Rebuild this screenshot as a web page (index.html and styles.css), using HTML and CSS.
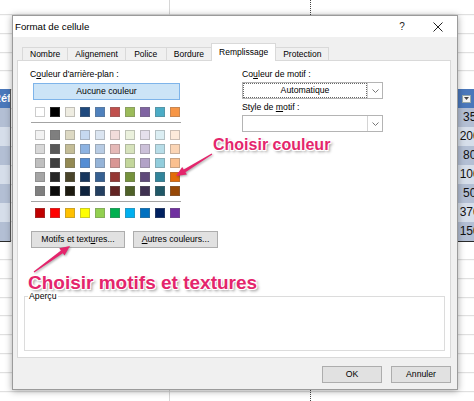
FILE: index.html
```html
<!DOCTYPE html>
<html lang="fr">
<head>
<meta charset="utf-8">
<title>Format de cellule</title>
<link rel="stylesheet" href="styles.css">
</head>
<body>
<div class="screen">
  <div class="sheet">
    <div class="tbl tbl-left">
      <div class="th"><span class="cut">Référence</span></div>
      <div class="td"></div><div class="td"></div><div class="td"></div><div class="td"></div>
      <div class="td"></div><div class="td"></div><div class="td"></div>
    </div>
    <div class="gap"></div>
    <div class="tbl tbl-right">
      <div class="th"><span class="filter"><svg width="5" height="3" viewBox="0 0 5 3"><path d="M0 0h5L2.5 3z" fill="#444"/></svg></span></div>
      <div class="td">350</div><div class="td">2000</div><div class="td">800</div><div class="td">1000</div>
      <div class="td">500</div><div class="td">3700</div><div class="td">1500</div>
    </div>
  </div>

  <div class="dialog">
    <div class="titlebar">
      <span class="title">Format de cellule</span>
      <span class="ctrl help">?</span>
      <span class="ctrl close"><svg width="10" height="10" viewBox="0 0 10 10"><path d="M0.5 0.5L9.5 9.5M9.5 0.5L0.5 9.5" stroke="#222" stroke-width="1" fill="none"/></svg></span>
    </div>
    <div class="body">
      <div class="tabs">
        <div class="tab">Nombre</div>
        <div class="tab">Alignement</div>
        <div class="tab">Police</div>
        <div class="tab">Bordure</div>
        <div class="tab active">Remplissage</div>
        <div class="tab">Protection</div>
      </div>
      <div class="panel">
        <div class="cols">
          <div class="left">
            <div class="lbl lbl-left">C<u>o</u>uleur d'arrière-plan :</div>
            <div class="none-btn">Aucune couleur</div>
            <div class="swrow row1">
              <span class="sw" style="background:#ffffff"></span>
              <span class="sw" style="background:#000000"></span>
              <span class="sw" style="background:#eeece1"></span>
              <span class="sw" style="background:#1f497d"></span>
              <span class="sw" style="background:#4f81bd"></span>
              <span class="sw" style="background:#c0504d"></span>
              <span class="sw" style="background:#9bbb59"></span>
              <span class="sw" style="background:#8064a2"></span>
              <span class="sw" style="background:#4bacc6"></span>
              <span class="sw" style="background:#f79646"></span>
            </div>
            <div class="sep"></div>
            <div class="grid">
              <div class="swrow">
                <span class="sw" style="background:#f2f2f2"></span>
                <span class="sw" style="background:#7f7f7f"></span>
                <span class="sw" style="background:#ddd9c3"></span>
                <span class="sw" style="background:#c6d9f0"></span>
                <span class="sw" style="background:#dbe5f1"></span>
                <span class="sw" style="background:#f2dcdb"></span>
                <span class="sw" style="background:#ebf1dd"></span>
                <span class="sw" style="background:#e5e0ec"></span>
                <span class="sw" style="background:#dbeef3"></span>
                <span class="sw" style="background:#fdeada"></span>
              </div>
              <div class="swrow">
                <span class="sw" style="background:#d8d8d8"></span>
                <span class="sw" style="background:#595959"></span>
                <span class="sw" style="background:#c4bd97"></span>
                <span class="sw" style="background:#8db3e2"></span>
                <span class="sw" style="background:#b8cce4"></span>
                <span class="sw" style="background:#e5b9b7"></span>
                <span class="sw" style="background:#d7e3bc"></span>
                <span class="sw" style="background:#ccc1d9"></span>
                <span class="sw" style="background:#b7dde8"></span>
                <span class="sw" style="background:#fbd5b5"></span>
              </div>
              <div class="swrow">
                <span class="sw" style="background:#bfbfbf"></span>
                <span class="sw" style="background:#3f3f3f"></span>
                <span class="sw" style="background:#938953"></span>
                <span class="sw" style="background:#548dd4"></span>
                <span class="sw" style="background:#95b3d7"></span>
                <span class="sw" style="background:#d99694"></span>
                <span class="sw" style="background:#c3d69b"></span>
                <span class="sw" style="background:#b2a2c7"></span>
                <span class="sw" style="background:#92cddc"></span>
                <span class="sw" style="background:#fac08f"></span>
              </div>
              <div class="swrow">
                <span class="sw" style="background:#a5a5a5"></span>
                <span class="sw" style="background:#262626"></span>
                <span class="sw" style="background:#494429"></span>
                <span class="sw" style="background:#17365d"></span>
                <span class="sw" style="background:#366092"></span>
                <span class="sw" style="background:#953734"></span>
                <span class="sw" style="background:#76923c"></span>
                <span class="sw" style="background:#5f497a"></span>
                <span class="sw" style="background:#31859b"></span>
                <span class="sw" style="background:#e36c09"></span>
              </div>
              <div class="swrow">
                <span class="sw" style="background:#7f7f7f"></span>
                <span class="sw" style="background:#0c0c0c"></span>
                <span class="sw" style="background:#1d1b10"></span>
                <span class="sw" style="background:#0f243e"></span>
                <span class="sw" style="background:#244061"></span>
                <span class="sw" style="background:#632423"></span>
                <span class="sw" style="background:#4f6128"></span>
                <span class="sw" style="background:#3f3151"></span>
                <span class="sw" style="background:#205867"></span>
                <span class="sw" style="background:#974806"></span>
              </div>
            </div>
            <div class="sep sep2"></div>
            <div class="swrow std">
              <span class="sw" style="background:#c00000"></span>
              <span class="sw" style="background:#ff0000"></span>
              <span class="sw" style="background:#ffc000"></span>
              <span class="sw" style="background:#ffff00"></span>
              <span class="sw" style="background:#92d050"></span>
              <span class="sw" style="background:#00b050"></span>
              <span class="sw" style="background:#00b0f0"></span>
              <span class="sw" style="background:#0070c0"></span>
              <span class="sw" style="background:#002060"></span>
              <span class="sw" style="background:#7030a0"></span>
            </div>
          </div>
          <div class="right">
            <div class="lbl">Co<u>u</u>leur de motif :</div>
            <div class="select focus">
              <div class="val">Automatique</div>
              <div class="arrow"><svg width="7" height="4" viewBox="0 0 7 4"><path d="M0.5 0.5L3.5 3.5L6.5 0.5" stroke="#777" fill="none"/></svg></div>
            </div>
            <div class="lbl lbl2">Style de <u>m</u>otif :</div>
            <div class="select">
              <div class="val"></div>
              <div class="arrow"><svg width="7" height="4" viewBox="0 0 7 4"><path d="M0.5 0.5L3.5 3.5L6.5 0.5" stroke="#777" fill="none"/></svg></div>
            </div>
          </div>
        </div>
        <div class="btnrow">
          <div class="btn btn-motifs">Motifs et text<u>u</u>res...</div>
          <div class="btn btn-autres"><u>A</u>utres couleurs...</div>
        </div>
        <fieldset class="preview">
          <legend>Aperçu</legend>
        </fieldset>
      </div>
      <div class="footer">
        <div class="btn btn-ok">OK</div>
        <div class="btn btn-ok">Annuler</div>
      </div>
    </div>
  </div>

  <div class="note note1">Choisir couleur</div>
  <div class="note note2">Choisir motifs et textures</div>
  <svg class="arrows" width="474" height="401" viewBox="0 0 474 401">
    <polygon points="212.3,154.5 185.4,172.2 186.9,174.6 176,176 182.2,167 183.7,169.4 211.7,153.5" fill="#e4256c"/>
    <polygon points="34.35,272.49 62.83,253.16 64.52,255.51 70,246 59.26,248.21 60.95,250.56 33.65,271.51" fill="#e4256c"/>
  </svg>
</div>
</body>
</html>
```

FILE: styles.css
```css
* { box-sizing: border-box; }
html, body { margin: 0; padding: 0; }
body {
  width: 474px;
  height: 401px;
  overflow: hidden;
  background: #ffffff;
  font-family: "Liberation Sans", Arial, sans-serif;
}
.screen {
  position: relative;
  width: 474px;
  height: 401px;
  overflow: hidden;
}

/* spreadsheet behind the dialog */
.sheet {
  width: 500px;
  height: 401px;
  display: grid;
  grid-template-columns: 11px 1fr 55px;
  align-items: start;
  padding-top: 89px;
  background-image:
    linear-gradient(to bottom, #444 50%, transparent 50%),
    linear-gradient(to right, transparent 169px, #d6d6d6 169px, #d6d6d6 170px, transparent 170px),
    repeating-linear-gradient(to bottom, transparent 0, transparent 17.85px, #dadada 17.85px, #dadada 18.85px);
  background-size: 1px 2px, auto, auto;
  background-repeat: repeat-y, no-repeat, repeat;
  background-position: 310px 0, 0 0, 0 -3.85px;
}
.tbl {
  display: flex;
  flex-direction: column;
  border-bottom: 1px solid #2a2a2a;
}
.tbl .th {
  height: 19px;
  background: #4a78bb;
  color: #fff;
  font-weight: bold;
  font-size: 11px;
  line-height: 19px;
  overflow: hidden;
  white-space: nowrap;
  display: flex;
  align-items: center;
}
.tbl .td {
  height: 19px;
  line-height: 19px;
  font-size: 12px;
  color: #111;
  background: #d6deea;
  white-space: nowrap;
  text-align: center;
}
.tbl .td:nth-child(even) { background: #b3bfd4; }
.tbl-left { border-right: 1px solid #5a5a5a; overflow: hidden; }
.cut { margin-left: -7px; }
.tbl-right { border-left: 1px solid #3a3a3a; }
.filter {
  margin-left: 16px;
  width: 9px;
  height: 8px;
  background: #f4f4f4;
  border: 1px solid #9aa;
  display: flex;
  align-items: center;
  justify-content: center;
}

/* dialog window */
.dialog {
  position: absolute;
  left: 12px;
  top: 15px;
  width: 446px;
  height: 375px;
  border: 1px solid #9b9b9b;
  box-shadow: 0 1px 7px rgba(0, 0, 0, 0.35);
  background: #f0f0f0;
  display: flex;
  flex-direction: column;
  font-size: 8.7px;
  color: #000;
}
.titlebar {
  height: 21px;
  background: #fff;
  display: flex;
  align-items: center;
  padding-left: 2px;
  padding-right: 12px;
}
.title { flex: 1; font-size: 9.7px; }
.ctrl {
  width: 14px;
  display: flex;
  justify-content: center;
  align-items: center;
}
.help { font-size: 10px; color: #222; margin-right: 22px; }
.body {
  flex: 1;
  padding: 6px 6px 6px 4px;
  display: flex;
  flex-direction: column;
}
.tabs {
  display: flex;
  align-items: flex-end;
  height: 17px;
  padding-left: 5px;
}
.tab {
  height: 13px;
  min-width: 42px;
  padding: 0 7px;
  border: 1px solid #d9d9d9;
  border-bottom: none;
  margin-right: -1px;
  background: #f0f0f0;
  line-height: 12px;
  font-size: 8.5px;
  text-align: center;
  white-space: nowrap;
}
.tab.active {
  height: 18px;
  background: #fff;
  margin-bottom: -1px;
  position: relative;
  z-index: 1;
  line-height: 16px;
}
.panel {
  height: 298px;
  background: #fff;
  border: 1px solid #d9d9d9;
  padding: 7px 0 0 13px;
  display: flex;
  flex-direction: column;
}
.cols { display: flex; }
.left { width: 150px; display: flex; flex-direction: column; }
.right { margin-left: 61px; width: 141px; display: flex; flex-direction: column; }
.lbl { height: 12px; line-height: 12px; white-space: nowrap; }
.lbl-left { margin-left: -1px; }
.lbl2 { margin-top: 2px; }
.none-btn {
  margin: 3px 1px 0 2px;
  height: 17px;
  background: #cce4f7;
  border: 1px solid #7eb4ea;
  text-align: center;
  line-height: 15px;
}
.swrow { display: flex; gap: 5px; padding-left: 4px; }
.sw {
  width: 10px;
  height: 10px;
  box-shadow: inset 0 0 0 1px rgba(110, 110, 110, 0.35);
}
.row1 { margin-top: 7px; }
.sep { height: 1px; background: #a3a3a3; margin-top: 5px; }
.grid { margin-top: 7px; display: flex; flex-direction: column; gap: 4px; }
.std { margin-top: 6px; }

.select {
  margin-top: 2px;
  display: flex;
  height: 17px;
  border: 1px solid #b4b4b4;
  background: #fff;
}
.select .val { flex: 1; text-align: center; line-height: 15px; }
.select.focus .val { outline: 1px dotted #666; outline-offset: -1px; }
.select .arrow {
  width: 15px;
  border-left: 1px solid #d4d4d4;
  display: flex;
  align-items: center;
  justify-content: center;
}

.btnrow { display: flex; gap: 8px; margin-top: 13px; }
.btn {
  height: 17px;
  background: #e1e1e1;
  border: 1px solid #adadad;
  line-height: 15px;
  text-align: center;
  white-space: nowrap;
}
.btn-motifs { width: 94px; }
.btn-autres { width: 85px; }
.btn-ok { width: 60px; }

.preview {
  margin: 42px 5px 0 -7px;
  height: 61px;
  padding: 0;
  border: 1px solid #dcdcdc;
  min-width: 0;
}
.preview legend {
  padding: 0 1px;
  margin-left: 3px;
  line-height: 12px;
  font-size: 8.7px;
}
.footer {
  display: flex;
  justify-content: flex-end;
  gap: 9px;
  margin-top: 8px;
}

/* annotations */
.note {
  position: absolute;
  font-family: "Liberation Sans", Arial, sans-serif;
  font-weight: bold;
  color: #e4256c;
  line-height: 1;
  white-space: nowrap;
  text-shadow: 1px 1px 0 #fff, -1px -1px 0 #fff, 1px -1px 0 #fff, -1px 1px 0 #fff, 2px 2px 3px rgba(0, 0, 0, 0.45);
}
.note1 { left: 213px; top: 137px; font-size: 16px; }
.note2 { left: 28px; top: 273px; font-size: 19px; }
.arrows {
  position: absolute;
  left: 0;
  top: 0;
  pointer-events: none;
  filter: drop-shadow(1px 1px 1px rgba(0, 0, 0, 0.35));
}
```
